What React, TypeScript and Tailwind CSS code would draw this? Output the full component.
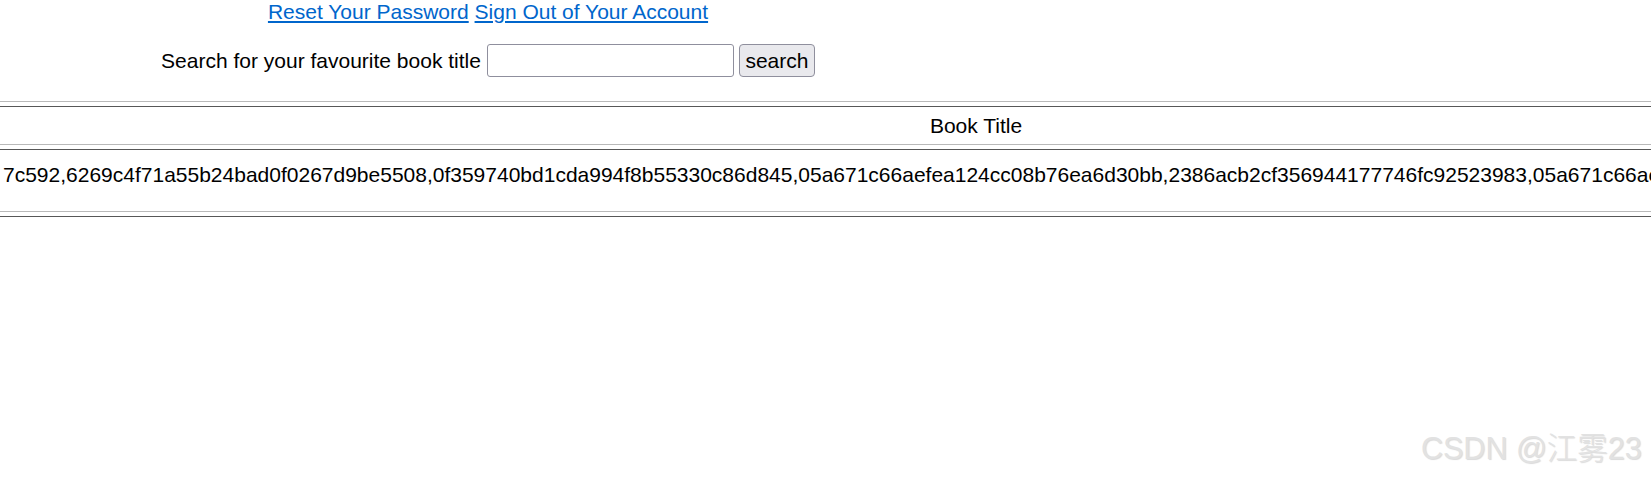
export default function App() {
  const hashes =
    "7c592,6269c4f71a55b24bad0f0267d9be5508,0f359740bd1cda994f8b55330c86d845,05a671c66aefea124cc08b76ea6d30bb,2386acb2cf356944177746fc92523983,05a671c66aefea124cc08b76ea6d30bb,6269c4f71a55b24bad0f0267d9be5508";

  return (
    <div className="relative h-[478px] w-full overflow-hidden bg-white font-['Liberation_Sans',Arial,sans-serif] text-[21px] leading-[24px] text-black">
      {/* Top: account links + search */}
      <div className="w-[976px] text-center">
        <div>
          <a href="#" className="text-[#0066cc] underline">
            Reset Your Password
          </a>{" "}
          <a href="#" className="text-[#0066cc] underline">
            Sign Out of Your Account
          </a>
        </div>
        <form className="mt-5 flex items-center justify-center" onSubmit={(e) => e.preventDefault()}>
          <label htmlFor="title">Search for your favourite book title</label>
          <input
            id="title"
            type="text"
            className="ml-[6px] h-[33px] w-[247px] rounded-[3px] border border-[#8f8f9d] bg-white px-1 outline-none"
          />
          <button
            type="submit"
            className="ml-[5px] h-[33px] w-[76px] rounded-[4px] border border-[#8f8f9d] bg-[#e9e9ed] text-[21px]"
          >
            search
          </button>
        </form>
      </div>

      {/* Results table */}
      <div className="mt-6 flex w-[1952px] flex-col gap-1 border-t border-b border-t-[#b9b9b9] border-b-[#575757] py-1">
        <div className="flex h-[39px] items-center justify-center border-t border-b border-t-[#575757] border-b-[#b9b9b9]">
          Book Title
        </div>
        <div className="h-[63px] whitespace-nowrap border-t border-b border-t-[#575757] border-b-[#b9b9b9] pl-[3px] pt-[13px]">
          {hashes}
        </div>
      </div>

      {/* CSDN watermark */}
      <div className="absolute left-[1421px] top-[431px] whitespace-nowrap font-['Liberation_Sans','Noto_Sans_CJK_SC',sans-serif] text-[30.5px] font-light leading-[34px] text-[#e2e2e2] [text-shadow:1px_1px_1px_rgba(0,0,0,0.15)]">
        CSDN @江雾23
      </div>
    </div>
  );
}
